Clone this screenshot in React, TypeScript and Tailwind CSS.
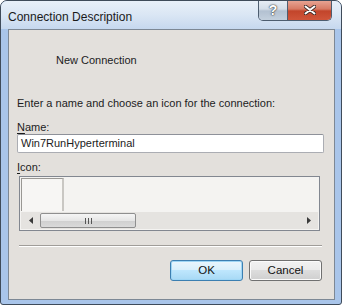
import React from "react";

const font = { fontFamily: '"Liberation Sans", Arial, sans-serif' };

function CaptionButtons() {
  return (
    <div className="flex mr-[9px] -mt-px h-[21px] rounded-b-[5px] border border-t-0 border-[#4d5d70] overflow-hidden">
      <div className="w-[29px] h-full flex items-center justify-center border-r border-[#4d5d70] bg-[linear-gradient(180deg,#e8eef5_0%,#d3dde8_45%,#b3c1d1_55%,#c3d0dd_100%)]">
        <span className="text-[14px] font-bold text-white leading-none [text-shadow:0_0_2px_#333,0_0_1px_#222]">?</span>
      </div>
      <div className="w-[43px] h-full flex items-center justify-center bg-[linear-gradient(180deg,#e9a898_0%,#d77a64_45%,#c2452b_55%,#d0553a_100%)]">
        <svg width="12" height="10" viewBox="0 0 12 10">
          <path d="M1.5 1.5 L10.5 8.5 M10.5 1.5 L1.5 8.5" stroke="#3a2a28" strokeWidth="3.6" strokeLinecap="round" />
          <path d="M1.5 1.5 L10.5 8.5 M10.5 1.5 L1.5 8.5" stroke="#ffffff" strokeWidth="2" strokeLinecap="round" />
        </svg>
      </div>
    </div>
  );
}

function IconList() {
  return (
    <div className="ml-[10px] mr-[14px] mt-px h-[55px] border border-[#828790] bg-[#f4f3f1] flex flex-col">
      <div className="flex-1 flex pl-px pt-px">
        <div className="w-[43px] h-[33px] border-l border-t border-[#9a9894] border-r-2 border-r-[#c9c7c3] bg-[#f7f6f4]"></div>
      </div>
      <div className="h-[17px] mx-px mb-px bg-[#e5e3e0] flex items-center">
        <div className="w-[19px] flex items-center justify-center">
          <svg width="4" height="7" viewBox="0 0 4 7"><path d="M4 0 L0 3.5 L4 7 Z" fill="#3a3a3a" /></svg>
        </div>
        <div className="w-[96px] h-[15px] rounded-[2px] border border-[#8f8f8f] bg-[linear-gradient(180deg,#f5f5f5_0%,#e6e6e6_50%,#cfcfcf_51%,#dadada_100%)] flex items-center justify-center">
          <svg width="7" height="6" viewBox="0 0 7 6"><path d="M0.5 0 V6 M3.5 0 V6 M6.5 0 V6" stroke="#555" strokeWidth="1" /></svg>
        </div>
        <div className="flex-1"></div>
        <div className="w-[18px] flex items-center justify-center">
          <svg width="4" height="7" viewBox="0 0 4 7"><path d="M0 0 L4 3.5 L0 7 Z" fill="#3a3a3a" /></svg>
        </div>
      </div>
    </div>
  );
}

export default function App() {
  return (
    <div className="w-[342px] h-[305px] bg-white">
      <div className="w-full h-full rounded-t-[7px] rounded-b-[3px] border border-[#3f4b5a] bg-[#a9c5ea] flex flex-col overflow-hidden" style={font}>
        <div className="h-[28px] flex justify-between bg-[linear-gradient(180deg,#e8f0f9_0%,#dae6f4_50%,#c6d8ef_100%)]">
          <div className="pl-[7px] pt-[8px] text-[12px] leading-[16px] text-[#1a1a1a]">Connection Description</div>
          <CaptionButtons />
        </div>
        <div className="flex-1 ml-[7px] mr-[6px] mb-[4px] border border-[#7d8895] bg-[#e3e0dc] flex flex-col text-[11px] text-[#1c1c1c]">
          <div className="pl-[47px] mt-[22px] leading-[16px]">New Connection</div>
          <div className="pl-[8px] mt-[27px] leading-[16px]">Enter a name and choose an icon for the connection:</div>
          <div className="pl-[8px] mt-[8px] leading-[16px]"><span className="underline underline-offset-2">N</span>ame:</div>
          <div className="ml-[8px] mr-[10px] mt-[-1px] h-[19px] border border-[#abadb3] border-t-[#8e9199] bg-white rounded-[2px] flex items-center pl-[3px] leading-none">Win7RunHyperterminal</div>
          <div className="pl-[8px] mt-[6px] leading-[16px]"><span className="underline underline-offset-2">I</span>con:</div>
          <IconList />
          <div className="ml-[10px] mr-[12px] mt-[14px] h-[2px] border-t border-[#a09d99] border-b border-b-white"></div>
          <div className="flex justify-end gap-[6px] mr-[12px] mt-[13px]">
            <button className="w-[73px] h-[21px] rounded-[3px] border border-[#3c7fb1] bg-[linear-gradient(180deg,#eaf6fd_0%,#d9f0fc_45%,#bee6fd_50%,#a7d9f5_100%)] text-[11.5px] text-[#111] shadow-[inset_0_0_0_1px_#9fd6f5] leading-none">OK</button>
            <button className="w-[73px] h-[21px] rounded-[3px] border border-[#707070] bg-[linear-gradient(180deg,#f2f2f2_0%,#ebebeb_45%,#dddddd_50%,#cfcfcf_100%)] text-[11.5px] text-[#111] shadow-[inset_0_0_0_1px_#fbfbfb] leading-none">Cancel</button>
          </div>
        </div>
      </div>
    </div>
  );
}
